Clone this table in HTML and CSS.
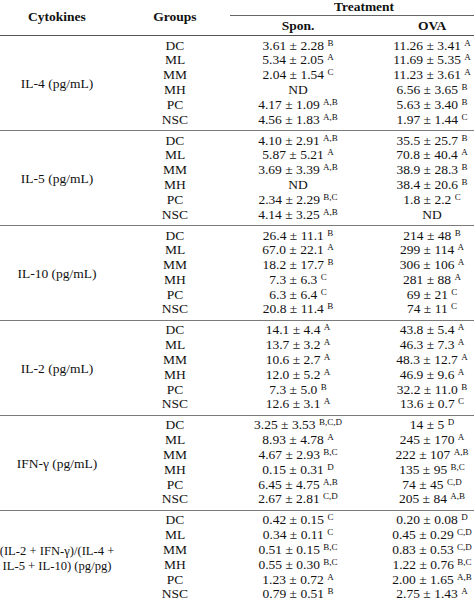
FILE: index.html
```html
<!DOCTYPE html>
<html lang="en">
<head>
<meta charset="utf-8">
<title>Cytokines table</title>
<link rel="stylesheet" href="styles.css">
</head>
<body>
<div class="page">
<table class="data">
  <colgroup>
    <col class="c-cyto"><col class="c-group"><col class="c-spon"><col class="c-ova">
  </colgroup>
  <thead>
    <tr class="h1">
      <th rowspan="2" class="hcell">Cytokines</th>
      <th rowspan="2" class="hcell">Groups</th>
      <th colspan="2" class="treat">Treatment</th>
    </tr>
    <tr class="h2">
      <th class="sub">Spon.</th>
      <th class="sub">OVA</th>
    </tr>
  </thead>
  <tbody class="block">
    <tr class="first"><td rowspan="6" class="label">IL-4 (pg/mL)</td><td>DC</td><td>3.61 ± 2.28 <sup>B</sup></td><td>11.26 ± 3.41 <sup>A</sup></td></tr>
    <tr><td>ML</td><td>5.34 ± 2.05 <sup>A</sup></td><td>11.69 ± 5.35 <sup>A</sup></td></tr>
    <tr><td>MM</td><td>2.04 ± 1.54 <sup>C</sup></td><td>11.23 ± 3.61 <sup>A</sup></td></tr>
    <tr><td>MH</td><td>ND</td><td>6.56 ± 3.65 <sup>B</sup></td></tr>
    <tr><td>PC</td><td>4.17 ± 1.09 <sup>A,B</sup></td><td>5.63 ± 3.40 <sup>B</sup></td></tr>
    <tr class="last"><td>NSC</td><td>4.56 ± 1.83 <sup>A,B</sup></td><td>1.97 ± 1.44 <sup>C</sup></td></tr>
  </tbody>
  <tbody class="block">
    <tr class="first"><td rowspan="6" class="label">IL-5 (pg/mL)</td><td>DC</td><td>4.10 ± 2.91 <sup>A,B</sup></td><td>35.5 ± 25.7 <sup>B</sup></td></tr>
    <tr><td>ML</td><td>5.87 ± 5.21 <sup>A</sup></td><td>70.8 ± 40.4 <sup>A</sup></td></tr>
    <tr><td>MM</td><td>3.69 ± 3.39 <sup>A,B</sup></td><td>38.9 ± 28.3 <sup>B</sup></td></tr>
    <tr><td>MH</td><td>ND</td><td>38.4 ± 20.6 <sup>B</sup></td></tr>
    <tr><td>PC</td><td>2.34 ± 2.29 <sup>B,C</sup></td><td>1.8 ± 2.2 <sup>C</sup></td></tr>
    <tr class="last"><td>NSC</td><td>4.14 ± 3.25 <sup>A,B</sup></td><td>ND</td></tr>
  </tbody>
  <tbody class="block">
    <tr class="first"><td rowspan="6" class="label">IL-10 (pg/mL)</td><td>DC</td><td>26.4 ± 11.1 <sup>B</sup></td><td>214 ± 48 <sup>B</sup></td></tr>
    <tr><td>ML</td><td>67.0 ± 22.1 <sup>A</sup></td><td>299 ± 114 <sup>A</sup></td></tr>
    <tr><td>MM</td><td>18.2 ± 17.7 <sup>B</sup></td><td>306 ± 106 <sup>A</sup></td></tr>
    <tr><td>MH</td><td>7.3 ± 6.3 <sup>C</sup></td><td>281 ± 88 <sup>A</sup></td></tr>
    <tr><td>PC</td><td>6.3 ± 6.4 <sup>C</sup></td><td>69 ± 21 <sup>C</sup></td></tr>
    <tr class="last"><td>NSC</td><td>20.8 ± 11.4 <sup>B</sup></td><td>74 ± 11 <sup>C</sup></td></tr>
  </tbody>
  <tbody class="block">
    <tr class="first"><td rowspan="6" class="label">IL-2 (pg/mL)</td><td>DC</td><td>14.1 ± 4.4 <sup>A</sup></td><td>43.8 ± 5.4 <sup>A</sup></td></tr>
    <tr><td>ML</td><td>13.7 ± 3.2 <sup>A</sup></td><td>46.3 ± 7.3 <sup>A</sup></td></tr>
    <tr><td>MM</td><td>10.6 ± 2.7 <sup>A</sup></td><td>48.3 ± 12.7 <sup>A</sup></td></tr>
    <tr><td>MH</td><td>12.0 ± 5.2 <sup>A</sup></td><td>46.9 ± 9.6 <sup>A</sup></td></tr>
    <tr><td>PC</td><td>7.3 ± 5.0 <sup>B</sup></td><td>32.2 ± 11.0 <sup>B</sup></td></tr>
    <tr class="last"><td>NSC</td><td>12.6 ± 3.1 <sup>A</sup></td><td>13.6 ± 0.7 <sup>C</sup></td></tr>
  </tbody>
  <tbody class="block">
    <tr class="first"><td rowspan="6" class="label">IFN-γ (pg/mL)</td><td>DC</td><td>3.25 ± 3.53 <sup>B,C,D</sup></td><td>14 ± 5 <sup>D</sup></td></tr>
    <tr><td>ML</td><td>8.93 ± 4.78 <sup>A</sup></td><td>245 ± 170 <sup>A</sup></td></tr>
    <tr><td>MM</td><td>4.67 ± 2.93 <sup>B,C</sup></td><td>222 ± 107 <sup>A,B</sup></td></tr>
    <tr><td>MH</td><td>0.15 ± 0.31 <sup>D</sup></td><td>135 ± 95 <sup>B,C</sup></td></tr>
    <tr><td>PC</td><td>6.45 ± 4.75 <sup>A,B</sup></td><td>74 ± 45 <sup>C,D</sup></td></tr>
    <tr class="last"><td>NSC</td><td>2.67 ± 2.81 <sup>C,D</sup></td><td>205 ± 84 <sup>A,B</sup></td></tr>
  </tbody>
  <tbody class="block">
    <tr class="first"><td rowspan="6" class="label two">(IL-2 + IFN-γ)/(IL-4 +<br>IL-5 + IL-10) (pg/pg)</td><td>DC</td><td>0.42 ± 0.15 <sup>C</sup></td><td>0.20 ± 0.08 <sup>D</sup></td></tr>
    <tr><td>ML</td><td>0.34 ± 0.11 <sup>C</sup></td><td>0.45 ± 0.29 <sup>C,D</sup></td></tr>
    <tr><td>MM</td><td>0.51 ± 0.15 <sup>B,C</sup></td><td>0.83 ± 0.53 <sup>C,D</sup></td></tr>
    <tr><td>MH</td><td>0.55 ± 0.30 <sup>B,C</sup></td><td>1.22 ± 0.76 <sup>B,C</sup></td></tr>
    <tr><td>PC</td><td>1.23 ± 0.72 <sup>A</sup></td><td>2.00 ± 1.65 <sup>A,B</sup></td></tr>
    <tr class="last"><td>NSC</td><td>0.79 ± 0.51 <sup>B</sup></td><td>2.75 ± 1.43 <sup>A</sup></td></tr>
  </tbody>
</table>
</div>
</body>
</html>
```

FILE: styles.css
```css
html, body {
  margin: 0;
  padding: 0;
  background: #ffffff;
}
body {
  overflow: hidden;
  width: 474px;
  height: 604px;
}
.page {
  margin-left: -6px;
  width: 504px;
}
.data {
  width: 504px;
  border-collapse: collapse;
  table-layout: fixed;
  font-family: "Liberation Serif", "Times New Roman", serif;
  font-size: 13.5px;
  color: #111111;
}
.c-cyto { width: 126px; }
.c-group { width: 110px; }
.c-spon { width: 136px; }
.c-ova { width: 132px; }

.data th, .data td {
  padding: 0;
  text-align: center;
  line-height: 14.8px;
  white-space: nowrap;
}
.data th {
  font-weight: bold;
}
.data thead {
  border-bottom: 1px solid #555555;
}
.h1 .treat {
  padding-bottom: 0.2px;
  border-bottom: 1px solid #666666;
}
.h2 .sub {
  padding-top: 3px;
  padding-bottom: 1.2px;
}
.block {
  border-bottom: 1px solid #7a7a7a;
}
.block tr.first td {
  padding-top: 2.6px;
}
.block tr.last td {
  padding-bottom: 2.6px;
}
.block td.label {
  padding: 0;
  vertical-align: middle;
}
.label.two {
  font-size: 12.6px;
  line-height: 15px;
  padding-left: 8px;
}
.data sup {
  font-size: 9px;
  line-height: 0;
  vertical-align: 4px;
}
```
